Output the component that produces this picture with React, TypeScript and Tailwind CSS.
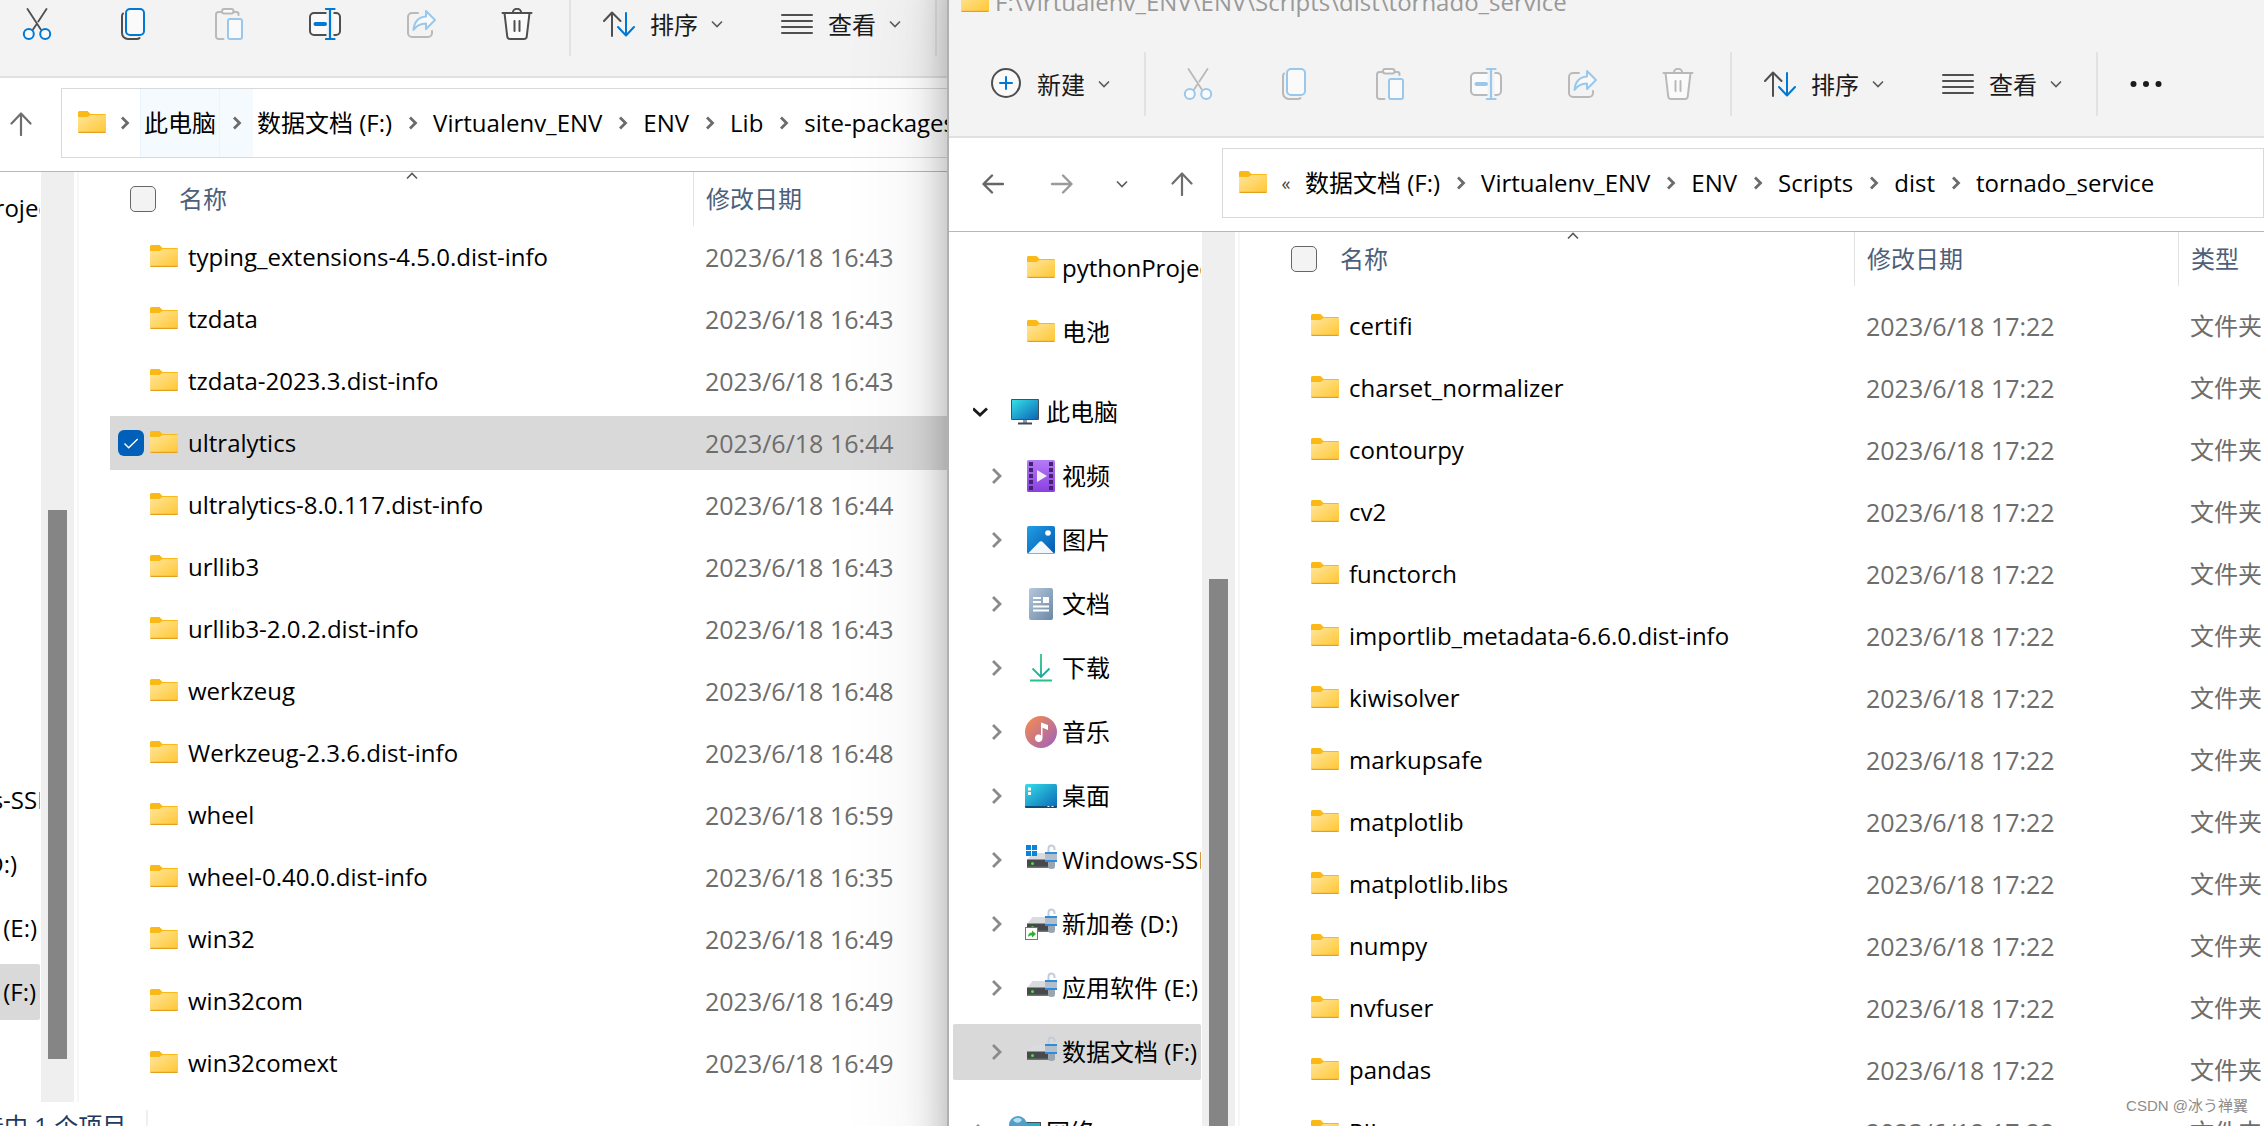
import type { ReactNode } from 'react'

type FileRow = { name: string; date: string; type?: string; selected?: boolean }
type IconProps = { muted?: boolean }

const LEFT_FILES: FileRow[] = [
  { name: 'typing_extensions-4.5.0.dist-info', date: '2023/6/18 16:43' },
  { name: 'tzdata', date: '2023/6/18 16:43' },
  { name: 'tzdata-2023.3.dist-info', date: '2023/6/18 16:43' },
  { name: 'ultralytics', date: '2023/6/18 16:44', selected: true },
  { name: 'ultralytics-8.0.117.dist-info', date: '2023/6/18 16:44' },
  { name: 'urllib3', date: '2023/6/18 16:43' },
  { name: 'urllib3-2.0.2.dist-info', date: '2023/6/18 16:43' },
  { name: 'werkzeug', date: '2023/6/18 16:48' },
  { name: 'Werkzeug-2.3.6.dist-info', date: '2023/6/18 16:48' },
  { name: 'wheel', date: '2023/6/18 16:59' },
  { name: 'wheel-0.40.0.dist-info', date: '2023/6/18 16:35' },
  { name: 'win32', date: '2023/6/18 16:49' },
  { name: 'win32com', date: '2023/6/18 16:49' },
  { name: 'win32comext', date: '2023/6/18 16:49' },
]

const RIGHT_FILES: FileRow[] = [
  'certifi',
  'charset_normalizer',
  'contourpy',
  'cv2',
  'functorch',
  'importlib_metadata-6.6.0.dist-info',
  'kiwisolver',
  'markupsafe',
  'matplotlib',
  'matplotlib.libs',
  'numpy',
  'nvfuser',
  'pandas',
  'PIL',
].map(name => ({ name, date: '2023/6/18 17:22', type: '文件夹' }))

/* ---------- toolbar icons ---------- */

const ink = (muted?: boolean) => (muted ? '#b9b9b9' : '#4f4f4f')
const accent = (muted?: boolean) => (muted ? '#99c8ec' : '#0078d4')

function Glyph({ children }: { children: ReactNode }) {
  return (
    <svg width="32" height="32" viewBox="0 0 32 32" fill="none" strokeWidth="2" strokeLinecap="round" strokeLinejoin="round" className="shrink-0" aria-hidden="true">
      {children}
    </svg>
  )
}

function CutIcon({ muted }: IconProps) {
  return (
    <Glyph>
      <path d="M6.5 1 19.8 21.5M25.5 1l-8.2 12.6M15 17l-3 4.5" stroke={ink(muted)} strokeWidth="1.8" />
      <ellipse cx="7.8" cy="26" rx="5" ry="5" fill="#fafafa" stroke={accent(muted)} />
      <ellipse cx="24.2" cy="26" rx="5" ry="5" fill="#fafafa" stroke={accent(muted)} />
    </Glyph>
  )
}

function CopyIcon({ muted }: IconProps) {
  return (
    <Glyph>
      <path d="M6 5.5C5.3 6.2 5 7 5 8.200V25a6 6 0 0 0 6 6h8.500c1.500 0 2.500-.4 3-1" stroke={ink(muted)} />
      <rect x="9" y="1" width="18" height="26" rx="4" fill="#fafafa" stroke={accent(muted)} />
    </Glyph>
  )
}

function PasteIcon({ muted }: IconProps) {
  return (
    <Glyph>
      <path d="M10.500 31H5.500A2.500 2.500 0 0 1 3 28.500v-22A2.500 2.500 0 0 1 5.500 4H8M21 4h2.500A2 2 0 0 1 25.500 6v1" stroke={ink(muted)} />
      <rect x="9" y="1" width="11.500" height="4.500" rx="2.200" fill="#fafafa" stroke={ink(muted)} />
      <rect x="15" y="11" width="14" height="20" rx="2" fill="#fafafa" stroke={accent(muted)} />
    </Glyph>
  )
}

function RenameIcon({ muted }: IconProps) {
  return (
    <Glyph>
      <path d="M17.500 5H5a4 4 0 0 0-4 4v14a4 4 0 0 0 4 4h12.500M24.500 5H27a4 4 0 0 1 4 4v14a4 4 0 0 1-4 4h-2.500" fill="#fafafa" stroke={ink(muted)} strokeLinecap="butt" />
      <path d="M17 1h8.500M17 31h8.500M21 1v30" stroke={accent(muted)} strokeWidth="2.200" />
      <path d="M6.500 16H16" stroke={accent(muted)} strokeWidth="4" />
    </Glyph>
  )
}

function ShareIcon({ muted }: IconProps) {
  return (
    <Glyph>
      <path d="M13 5H7a4 4 0 0 0-4 4v16a4 4 0 0 0 4 4h16a4 4 0 0 0 4-4v-2" stroke={ink(muted)} />
      <path d="M21 3l9 9-9 9v-5.500c-6 0-9.500 2-12.500 6.500C9.300 13.500 13.500 9 21 8.500z" fill="#f7f9fb" stroke={accent(muted)} />
    </Glyph>
  )
}

function TrashIcon({ muted }: IconProps) {
  return (
    <Glyph>
      <path d="M3.500 5l2.700 23.200A3 3 0 0 0 9.200 31h13.600a3 3 0 0 0 3-2.800L28.500 5z" fill="#fafafa" stroke={ink(muted)} />
      <path d="M1.500 5h29M11.800 5a4.200 4.200 0 0 1 8.400 0M13.500 13v10M18.500 13v10" stroke={ink(muted)} />
    </Glyph>
  )
}

function SortIcon() {
  return (
    <Glyph>
      <path d="M9 28V5M1 13l8-8.500 8.500 8.500" stroke="#4f4f4f" />
      <path d="M23 5v22M15 19l8 8.500 8-8.500" stroke="#0078d4" />
    </Glyph>
  )
}

function ViewIcon() {
  return (
    <Glyph>
      <path d="M1 7h30M1 13h30M1 19h30M1 25h30" stroke="#4f4f4f" />
    </Glyph>
  )
}

function NewIcon() {
  return (
    <Glyph>
      <circle cx="16" cy="15" r="14" fill="#fafafa" stroke="#4f4f4f" />
      <path d="M16 9v12M10 15h12" stroke="#0078d4" />
    </Glyph>
  )
}

function Caret({ className = '' }: { className?: string }) {
  return (
    <svg width="12" height="8" viewBox="0 0 12 8" fill="none" stroke="#5a5a5a" strokeWidth="1.600" className={`shrink-0 ${className}`} aria-hidden="true">
      <path d="M1 1.500l5 5 5-5" />
    </svg>
  )
}

/* ---------- folder, drive and library icons ---------- */

function FolderIcon() {
  return (
    <svg width="28" height="22" viewBox="0 0 28 22" className="mb-0.5 shrink-0" aria-hidden="true">
      <defs>
        <linearGradient id="folder" x1="0" y1="0" x2="1" y2="1">
          <stop offset="0" stopColor="#ffe69c" />
          <stop offset="1" stopColor="#ffc631" />
        </linearGradient>
      </defs>
      <path d="M0 1.500A1.500 1.500 0 0 1 1.500 0h8L12.500 3H27a1 1 0 0 1 1 1v16H0z" fill="#fbb917" />
      <path d="M0 6h9.500l3-2H28v16.500A1.500 1.500 0 0 1 26.500 22h-25A1.500 1.500 0 0 1 0 20.500z" fill="url(#folder)" />
      <path d="M.5 21.400h27" stroke="#e3a020" strokeWidth="1.200" />
    </svg>
  )
}

function Tile({ children }: { children: ReactNode }) {
  return (
    <svg width="32" height="32" viewBox="0 0 32 32" className="shrink-0" aria-hidden="true">
      {children}
    </svg>
  )
}

function ComputerIcon() {
  return (
    <Tile>
      <defs>
        <linearGradient id="screen" x1="0" y1="0" x2="1" y2="1">
          <stop offset="0" stopColor="#35dfe6" />
          <stop offset="1" stopColor="#0b66b8" />
        </linearGradient>
      </defs>
      <path d="M14 24h4v4h-4z" fill="#8d99a3" />
      <path d="M9 26.500h14v2H9z" fill="#3f4a54" />
      <rect x="2" y="3" width="28" height="21" rx="1" fill="#44515c" />
      <rect x="3" y="4" width="26" height="19" fill="url(#screen)" />
    </Tile>
  )
}

function VideoIcon() {
  return (
    <Tile>
      <defs>
        <linearGradient id="video" x1="0" y1="0" x2="0" y2="1">
          <stop offset="0" stopColor="#b57bf6" />
          <stop offset="1" stopColor="#8a3fe0" />
        </linearGradient>
      </defs>
      <rect x="2" y="0" width="28" height="32" rx="1.500" fill="url(#video)" />
      {[2, 8, 14, 20, 26].map(y => (
        <g key={y} fill="#42246e">
          <rect x="4" y={y} width="4" height="4" />
          <rect x="24" y={y} width="4" height="4" />
        </g>
      ))}
      <path d="M12 10l10 6-10 6z" fill="#f1ecf8" />
    </Tile>
  )
}

function PictureIcon() {
  return (
    <Tile>
      <defs>
        <linearGradient id="picture" x1="0" y1="0" x2="1" y2="1">
          <stop offset="0" stopColor="#1f9fe6" />
          <stop offset="1" stopColor="#0458ad" />
        </linearGradient>
      </defs>
      <rect x="2" y="2" width="28" height="28" rx="2" fill="url(#picture)" />
      <path d="M3 29.500L14 18.200c1.200-1.300 2.800-1.300 4 0l11 11.300z" fill="#f0f6fc" />
      <circle cx="23" cy="9" r="2.800" fill="#fff" />
    </Tile>
  )
}

function DocumentIcon() {
  return (
    <Tile>
      <defs>
        <linearGradient id="doc" x1="0" y1="0" x2="1" y2="1">
          <stop offset="0" stopColor="#b4c8dc" />
          <stop offset="1" stopColor="#6c87a5" />
        </linearGradient>
      </defs>
      <rect x="4" y="0" width="24" height="32" rx="2" fill="url(#doc)" />
      <path d="M8 10h8M8 14h8M8 18.500h16M8 22.500h16" stroke="#fff" strokeWidth="1.800" />
      <rect x="18" y="9" width="6" height="6" fill="#fff" />
    </Tile>
  )
}

function DownloadIcon() {
  return (
    <Tile>
      <defs>
        <linearGradient id="down" gradientUnits="userSpaceOnUse" x1="6" y1="4" x2="26" y2="28">
          <stop offset="0" stopColor="#35cf80" />
          <stop offset="1" stopColor="#109aa8" />
        </linearGradient>
      </defs>
      <path d="M16 2v23M7.500 16.500L16 25l8.500-8.500" fill="none" stroke="url(#down)" strokeWidth="1.800" />
      <path d="M5 28.500h22" stroke="#27c08a" strokeWidth="2" />
    </Tile>
  )
}

function MusicIcon() {
  return (
    <Tile>
      <defs>
        <linearGradient id="music" x1="0" y1="0" x2="1" y2="1">
          <stop offset="0.1" stopColor="#f08a55" />
          <stop offset="1" stopColor="#9b5fc0" />
        </linearGradient>
      </defs>
      <circle cx="16" cy="16" r="16" fill="url(#music)" />
      <path d="M16 6.500l7 2.500v5l-5.500-2.200V22A3.800 3.800 0 1 1 16 19.200z" fill="#fff" />
    </Tile>
  )
}

function DesktopIcon() {
  return (
    <Tile>
      <rect x="0" y="4" width="32" height="24" rx="1.500" fill="url(#screen)" />
      <path d="M0 26h32v.5a1.500 1.500 0 0 1-1.500 1.500h-29A1.500 1.500 0 0 1 0 26.500z" fill="#0a4f7c" />
      <path d="M3 7.500h3v3H3zM3 12h3v3H3zM22.500 26h2v1h-2zM26.500 26h2v1h-2z" fill="#fff" />
    </Tile>
  )
}

function DriveIcon({ badge }: { badge?: 'windows' | 'shortcut' }) {
  return (
    <Tile>
      <path d="M7.500 9H22v7H2z" fill="#d9dbde" />
      <rect x="2" y="15.500" width="27" height="8.500" fill="#47494c" />
      <rect x="2" y="22.500" width="27" height="1.500" fill="#6f7274" />
      <circle cx="7.500" cy="19.500" r="1.500" fill="#4be04b" />
      <path d="M23.500 8V4.500a3 3 0 0 1 6 0V6" fill="none" stroke="#c5ccd4" strokeWidth="2" />
      <path d="M23 17h7v5.500a3.500 2.500 0 0 1-7 0z" fill="#9aa5b1" />
      <rect x="20" y="8" width="12" height="10" fill="#b5bfca" />
      <path d="M20 9h12M20 17h12" stroke="#2b8ddb" strokeWidth="1.800" />
      {badge === 'windows' && <path d="M1 1h5v5H1zM7 1h5v5H7zM1 7h5v5H1zM7 7h5v5H7z" fill="#0a84d8" />}
      {badge === 'shortcut' && (
        <>
          <rect x=".5" y="19.500" width="12" height="12" fill="#fff" stroke="#3d9b3d" />
          <path d="M3 29c0-3 1.500-4.500 4-4.500v-2l4 3.500-4 3.500v-2c-2 0-3 .3-4 1.500z" fill="#2fae2f" />
        </>
      )}
    </Tile>
  )
}

function NetworkIcon() {
  return (
    <Tile>
      <rect x="14" y="6" width="18" height="15" fill="#44515c" />
      <rect x="15" y="7" width="16" height="13" fill="#1fb2cf" />
      <circle cx="9" cy="9" r="9" fill="#4f9fc9" />
      <path d="M4 4c3-3 7-3 9 0-2 3-6 4-9 0z" fill="#b7dcef" />
    </Tile>
  )
}

/* ---------- navigation pane ---------- */

type NavItem = { label: string; icon: ReactNode; root?: boolean; open?: boolean; leaf?: boolean; active?: boolean }

const NAV_ITEMS: NavItem[] = [
  { label: 'pythonProject', icon: <FolderIcon />, leaf: true },
  { label: '电池', icon: <FolderIcon />, leaf: true },
  { label: '此电脑', icon: <ComputerIcon />, root: true, open: true },
  { label: '视频', icon: <VideoIcon /> },
  { label: '图片', icon: <PictureIcon /> },
  { label: '文档', icon: <DocumentIcon /> },
  { label: '下载', icon: <DownloadIcon /> },
  { label: '音乐', icon: <MusicIcon /> },
  { label: '桌面', icon: <DesktopIcon /> },
  { label: 'Windows-SSD (C:)', icon: <DriveIcon badge="windows" /> },
  { label: '新加卷 (D:)', icon: <DriveIcon badge="shortcut" /> },
  { label: '应用软件 (E:)', icon: <DriveIcon /> },
  { label: '数据文档 (F:)', icon: <DriveIcon />, active: true },
  { label: '网络', icon: <NetworkIcon />, root: true },
]

function TreeArrow({ open }: { open?: boolean }) {
  return (
    <svg width="16" height="16" viewBox="0 0 16 16" fill="none" strokeWidth="2.800" aria-hidden="true">
      {open ? <path d="M0 4.500l7 6.500 7-6.500" stroke="#1a1a1a" /> : <path d="M4 1l7 7-7 7" stroke="#8a8a8a" />}
    </svg>
  )
}

function NavPane({ thumbClass }: { thumbClass: string }) {
  return (
    <>
      <nav className="flex w-[252px] shrink-0 flex-col gap-2 overflow-hidden pt-2 pl-1">
        {NAV_ITEMS.map(item => (
          <button
            key={item.label}
            className={`flex h-14 shrink-0 items-center rounded-xs text-black ${item.root ? 'mt-4 pl-5' : 'pl-9'} ${item.active ? 'bg-[#d9d9d9]' : ''}`}
          >
            <span className="w-9 shrink-0">{!item.leaf && <TreeArrow open={item.open} />}</span>
            <span className="flex w-8 shrink-0 justify-center">{item.icon}</span>
            <span className="pl-[5px] whitespace-nowrap">{item.label}</span>
          </button>
        ))}
      </nav>
      <div className="ml-px flex w-[33px] shrink-0 justify-center bg-[#efefef]">
        <div className={`w-[19px] bg-[#858585] ${thumbClass}`} />
      </div>
      <div className="ml-[3px] w-0.5 shrink-0 bg-[#f7f7f7]" />
    </>
  )
}

/* ---------- toolbar and address bar ---------- */

function Separator() {
  return <div className="mx-1 h-16 w-0.5 shrink-0 bg-[#e2e2e2]" />
}

function MenuButton({ icon, label }: { icon: ReactNode; label: string }) {
  return (
    <button className="flex h-16 shrink-0 items-center pr-[30px] pl-7 text-[#1b1b1b]">
      {icon}
      <span className="mr-[13px] ml-[15px] pt-0.5">{label}</span>
      <Caret />
    </button>
  )
}

function ToolButton({ label, children }: { label: string; children: ReactNode }) {
  return (
    <button aria-label={label} className="flex h-16 w-24 shrink-0 items-center justify-center">
      {children}
    </button>
  )
}

function Toolbar({ hasSelection }: { hasSelection: boolean }) {
  const muted = !hasSelection
  return (
    <div className="flex h-[106px] shrink-0 items-center overflow-hidden border-b-2 border-[#e0e0e0] bg-[#f3f3f3] pl-[13px]">
      <MenuButton icon={<NewIcon />} label="新建" />
      <Separator />
      <ToolButton label="剪切"><CutIcon muted={muted} /></ToolButton>
      <ToolButton label="复制"><CopyIcon muted={muted} /></ToolButton>
      <ToolButton label="粘贴"><PasteIcon muted /></ToolButton>
      <ToolButton label="重命名"><RenameIcon muted={muted} /></ToolButton>
      <ToolButton label="共享"><ShareIcon muted /></ToolButton>
      <ToolButton label="删除"><TrashIcon muted={muted} /></ToolButton>
      <Separator />
      <MenuButton icon={<SortIcon />} label="排序" />
      <MenuButton icon={<ViewIcon />} label="查看" />
      <Separator />
      <button aria-label="更多" className="flex h-16 shrink-0 items-center px-7">
        <svg width="32" height="32" viewBox="0 0 32 32" fill="#1b1b1b" aria-hidden="true">
          <circle cx="3.500" cy="16" r="3" />
          <circle cx="16" cy="16" r="3" />
          <circle cx="28.500" cy="16" r="3" />
        </svg>
      </button>
    </div>
  )
}

function CrumbArrow() {
  return (
    <svg width="10" height="14" viewBox="0 0 10 14" fill="none" stroke="#6b6b6b" strokeWidth="2.800" aria-hidden="true">
      <path d="M2 1.500L7.500 7 2 12.500" />
    </svg>
  )
}

type AddressProps = { crumbs: string[]; collapsed?: boolean; hovered?: string }

function AddressRow({ crumbs, collapsed, hovered }: AddressProps) {
  return (
    <div className="flex h-[94px] shrink-0 items-start border-b border-[#b8b8b8] bg-white pt-2.5">
      <div className="flex h-[72px] shrink-0 items-center pl-[9px]">
        <button aria-label="后退" className="flex w-[69px] justify-center">
          <svg width="22" height="20" viewBox="0 0 22 20" fill="none" stroke="#666" strokeWidth="2.400" strokeLinecap="round" strokeLinejoin="round">
            <path d="M21 10H2M10 1.500L1.500 10l8.500 8.500" />
          </svg>
        </button>
        <button aria-label="前进" className="flex w-[69px] justify-center">
          <svg width="22" height="20" viewBox="0 0 22 20" fill="none" stroke="#9a9a9a" strokeWidth="2.400" strokeLinecap="round" strokeLinejoin="round">
            <path d="M1 10h19M12 1.500l8.500 8.500-8.500 8.500" />
          </svg>
        </button>
        <button aria-label="最近浏览的位置" className="flex w-[52px] justify-center">
          <Caret />
        </button>
        <button aria-label="上移" className="flex w-[68px] justify-center">
          <svg width="22" height="24" viewBox="0 0 22 24" fill="none" stroke="#6e6e6e" strokeWidth="2.200" strokeLinecap="round" strokeLinejoin="round">
            <path d="M11 23V2M1.500 11.500L11 1.500l9.500 10" />
          </svg>
        </button>
      </div>
      <div className="ml-1.5 flex h-[70px] min-w-0 flex-1 items-center overflow-hidden border border-[#d9d9d9] pl-4 whitespace-nowrap text-black">
        <FolderIcon />
        <span className="ml-1 flex w-[30px] shrink-0 justify-center text-lg text-[#444]">
          {collapsed ? '«' : <CrumbArrow />}
        </span>
        {crumbs.map((crumb, i) => (
          <div key={crumb} className={`flex h-full shrink-0 ${crumb === hovered ? 'bg-[#f5faff]' : ''}`}>
            <button className={crumb === hovered ? 'border-x border-[#eaf4fd] px-[3px]' : 'px-1'}>{crumb}</button>
            {i < crumbs.length - 1 && (
              <button aria-label={`${crumb} 的子文件夹`} className="flex w-[33px] items-center justify-center">
                <CrumbArrow />
              </button>
            )}
          </div>
        ))}
      </div>
    </div>
  )
}

/* ---------- file list ---------- */

function FileTable({ files, headClass }: { files: FileRow[]; headClass: string }) {
  const hasType = files.some(f => f.type)
  return (
    <div className="min-w-0 flex-1 overflow-hidden pl-[31px]">
      <table className="w-full table-fixed border-separate border-spacing-0 text-left">
        <colgroup>
          <col className="w-[583px]" />
          <col className={hasType ? 'w-[324px]' : ''} />
          {hasType && <col />}
        </colgroup>
        <thead>
          <tr className={`align-top text-[#4c607a] ${headClass}`}>
            <th className="p-0 font-normal">
              <div className="relative ml-5 flex h-[54px] items-center">
                <input
                  type="checkbox"
                  aria-label="全选"
                  className="size-[26px] appearance-none rounded-[5px] border border-[#666] bg-[#f3f3f3]"
                />
                <span className="pl-[23px]">名称</span>
                <Caret className="absolute top-0 left-1/2 -translate-x-1/2 rotate-180" />
              </div>
            </th>
            <th className="p-0 font-normal">
              <div className="flex h-[54px] items-center border-l border-[#e2e2e2] pl-3">修改日期</div>
            </th>
            {hasType && (
              <th className="p-0 font-normal">
                <div className="flex h-[54px] items-center border-l border-[#e2e2e2] pl-3">类型</div>
              </th>
            )}
          </tr>
        </thead>
        <tbody>
          {files.map(file => {
            const cell = `h-[62px] border-y-4 border-transparent bg-clip-padding py-0 pr-0 whitespace-nowrap ${file.selected ? 'bg-[#d9d9d9]' : ''}`
            return (
              <tr key={file.name}>
                <td className={`pl-2 text-black ${cell}`}>
                  <div className="flex items-center">
                    <span className="relative mr-1.5 size-[26px] shrink-0">
                      {file.selected && (
                        <>
                          <input
                            type="checkbox"
                            defaultChecked
                            aria-label={file.name}
                            className="block size-[26px] appearance-none rounded-md bg-[#005fb8]"
                          />
                          <svg className="pointer-events-none absolute inset-0" width="26" height="26" viewBox="0 0 26 26" fill="none" stroke="#fff" strokeWidth="1.400" aria-hidden="true">
                            <path d="M6.500 13.500l4.200 4.200 9-8.700" />
                          </svg>
                        </>
                      )}
                    </span>
                    <FolderIcon />
                    <span className="pl-2.5">{file.name}</span>
                  </div>
                </td>
                <td className={`pl-3 text-[25px] text-[#6d6d6d] ${cell}`}>{file.date}</td>
                {hasType && <td className={`pl-3 text-[#6d6d6d] ${cell}`}>{file.type}</td>}
              </tr>
            )
          })}
        </tbody>
      </table>
    </div>
  )
}

/* ---------- explorer window ---------- */

type ExplorerProps = AddressProps & {
  className: string
  title?: string
  files: FileRow[]
  headClass: string
  thumbClass: string
  status?: string
}

function Explorer({ className, title, files, headClass, thumbClass, status, ...address }: ExplorerProps) {
  return (
    <section className={`absolute flex flex-col overflow-hidden border-l-2 border-[#b0b0b0] bg-white ${className}`}>
      <header className="flex h-[60px] shrink-0 items-center bg-[#f3f3f3] pl-3 text-[#999]">
        {title && (
          <>
            <FolderIcon />
            <h1 className="pl-1.5 whitespace-nowrap">{title}</h1>
          </>
        )}
      </header>
      <Toolbar hasSelection={files.some(f => f.selected)} />
      <AddressRow {...address} />
      <div className="flex min-h-0 flex-1">
        <NavPane thumbClass={thumbClass} />
        <FileTable files={files} headClass={headClass} />
      </div>
      <footer className="flex h-12 shrink-0 items-center bg-white pl-48 text-[#1f3a5f]">
        {status && <span className="border-r-2 border-[#efefef] pr-5 whitespace-nowrap">{status}</span>}
      </footer>
    </section>
  )
}

export default function App() {
  return (
    <main className="relative h-screen w-full overflow-hidden bg-white font-['Open_Sans','Noto_Sans_CJK_SC',sans-serif] text-2xl leading-8">
      <Explorer
        className="-top-[88px] -bottom-6 -left-[214px] w-[1230px]"
        crumbs={['此电脑', '数据文档 (F:)', 'Virtualenv_ENV', 'ENV', 'Lib', 'site-packages']}
        hovered="此电脑"
        files={LEFT_FILES}
        headClass="h-[54px]"
        thumbClass="mt-[338px] mb-[43px]"
        status="选中 1 个项目"
      />
      <Explorer
        className="-top-7 right-0 -bottom-[84px] left-[947px] shadow-[0_0_36px_rgba(0,0,0,0.28),0_0_100px_rgba(0,0,0,0.12)]"
        title="F:\Virtualenv_ENV\ENV\Scripts\dist\tornado_service"
        crumbs={['数据文档 (F:)', 'Virtualenv_ENV', 'ENV', 'Scripts', 'dist', 'tornado_service']}
        collapsed
        files={RIGHT_FILES}
        headClass="h-[63px]"
        thumbClass="mt-[347px] mb-[34px]"
      />
      <p className="absolute right-4 bottom-1 font-['Liberation_Sans','Noto_Sans_CJK_SC',sans-serif] text-[15px] text-[#8c8c8c]">
        CSDN @冰う禅翼
      </p>
    </main>
  )
}
